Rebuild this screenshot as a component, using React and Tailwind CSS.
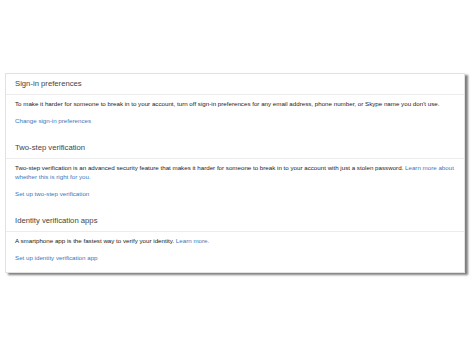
const sections = [
  {
    title: "Sign-in preferences",
    body: (
      <>
        To make it harder for someone to break in to your account, turn off sign-in preferences for any email address, phone number, or Skype name you don't use.
      </>
    ),
    link: "Change sign-in preferences",
  },
  {
    title: "Two-step verification",
    body: (
      <>
        Two-step verification is an advanced security feature that makes it harder for someone to break in to your account with just a stolen password.{" "}
        <a className="text-[#3a78bb]">Learn more about whether this is right for you.</a>
      </>
    ),
    link: "Set up two-step verification",
  },
  {
    title: "Identity verification apps",
    body: (
      <>
        A smartphone app is the fastest way to verify your identity.{" "}
        <a className="text-[#3a78bb]">Learn more.</a>
      </>
    ),
    link: "Set up identity verification app",
  },
];

const Section = ({ title, body, link, first }) => (
  <div className={first ? "" : "mt-[17px]"}>
    <div className="border-b border-[#ececec] px-[9px] pb-[4px]">
      <h2 className="h-[12px] text-[7.7px] leading-[12px] text-[#444]">{title}</h2>
    </div>
    <div className="pl-[9px] pr-[10px]">
      <p className="mt-[4px] text-[6.2px] leading-[9px] text-[#222]">{body}</p>
      <a className="mt-[8px] block text-[6.2px] leading-[9px] text-[#3a78bb]">{link}</a>
    </div>
  </div>
);

export default function App() {
  return (
    <div
      className="h-[345px] w-[474px] overflow-hidden bg-white"
      style={{ fontFamily: '"Liberation Sans", Arial, sans-serif' }}
    >
      <div className="ml-[5px] mt-[73px] w-[460px] border border-[#e2e2e2] bg-white pt-[4px] pb-[10px] shadow-[3px_2px_2px_rgba(0,0,0,0.5)]">
        {sections.map((s, i) => (
          <Section key={s.title} {...s} first={i === 0} />
        ))}
      </div>
    </div>
  );
}
